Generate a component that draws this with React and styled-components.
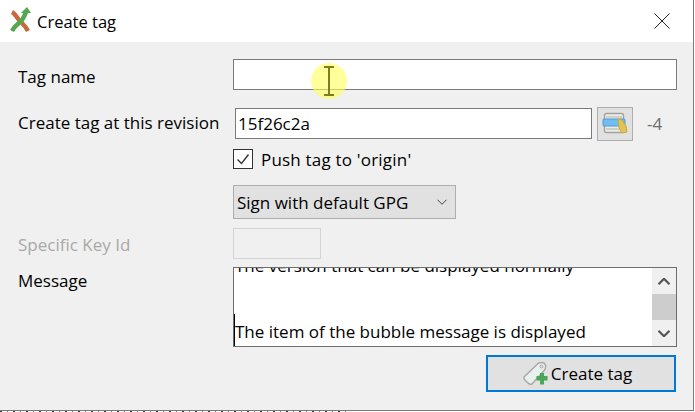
import React from "react";
import styled, { createGlobalStyle } from "styled-components";

const GlobalStyle = createGlobalStyle`
  html, body {
    margin: 0;
    padding: 0;
    background: #fff;
  }
  * {
    box-sizing: border-box;
  }
`;

const Page = styled.div`
  position: relative;
  width: 695px;
  height: 412px;
  overflow: hidden;
  background: #fff;
`;

const Dialog = styled.div`
  width: 694px;
  height: 411px;
  overflow: hidden;
  background: #f0f0f0;
  border-right: 1px solid #7a7a7a;
  border-bottom: 1px solid #7a7a7a;
  font-family: "Open Sans", "Noto Sans", sans-serif;
  font-size: 17px;
  color: #000;
`;

const BehindStrip = styled.div`
  width: 350px;
  height: 1px;
  background: repeating-linear-gradient(
    90deg,
    #444 0 2px,
    transparent 2px 7px,
    #777 7px 8px,
    transparent 8px 13px
  );
`;

const TitleBar = styled.div`
  height: 42px;
  background: #fff;
  display: flex;
  align-items: center;
  padding: 0 23px 0 10px;
  gap: 5px;
  font-size: 16.5px;
`;

const TitleText = styled.span`
  flex: 1;
`;

const AppIconWrap = styled.div`
  display: flex;
  margin-top: -4px;
`;

const Body = styled.div`
  display: grid;
  grid-template-columns: 215px 1fr;
  padding: 17px 16px 0 18px;
`;

const Label = styled.div`
  height: ${(p) => p.$h || 30}px;
  padding-top: ${(p) => p.$top || 0}px;
  color: ${(p) => (p.$disabled ? "#a9a9a9" : "#000")};
  line-height: 22px;
`;

const Field = styled.div`
  display: flex;
  align-items: flex-start;
  height: ${(p) => p.$h}px;
`;

const TextBox = styled.div`
  flex: ${(p) => (p.$w ? "none" : 1)};
  width: ${(p) => (p.$w ? `${p.$w}px` : "auto")};
  height: 31px;
  background: ${(p) => (p.$disabled ? "#f0f0f0" : "#fff")};
  border: ${(p) => (p.$disabled ? "1px solid #d4d4d4" : "1px solid #7a7a7a")};
  padding: 0 2px;
  line-height: 29px;
`;

const Revision = styled(TextBox)`
  margin-left: 2px;
  margin-right: 5px;
  flex: none;
  width: 357px;
`;

const PickButton = styled.div`
  width: 36px;
  height: 34px;
  margin-top: -1px;
  background: #e1e1e1;
  border: 1px solid #adadad;
  display: flex;
  align-items: center;
  justify-content: center;
`;

const Offset = styled.span`
  margin-left: 14px;
  color: #6d6d6d;
  line-height: 31px;
`;

const CheckRow = styled.div`
  display: flex;
  align-items: center;
  gap: 8px;
  height: 22px;
  letter-spacing: 0.2px;
`;

const CheckBox = styled.div`
  width: 20px;
  height: 20px;
  background: #fff;
  border: 1px solid #333;
  display: flex;
  align-items: center;
  justify-content: center;
`;

const Select = styled.div`
  width: 223px;
  height: 34px;
  background: #e1e1e1;
  border: 1px solid #adadad;
  padding: 0 8px 0 3px;
  display: flex;
  align-items: center;
  justify-content: space-between;
`;

const MessageBox = styled.div`
  flex: 1;
  height: 80px;
  background: #fff;
  border: 1px solid #6e6e6e;
  display: flex;
  overflow: hidden;
`;

const MessageText = styled.div`
  flex: 1;
  overflow: hidden;
  padding-left: 1px;
  line-height: 22px;
  margin-top: -13px;
  white-space: pre;
`;

const Caret = styled.span`
  position: absolute;
  left: -1px;
  top: -7px;
  width: 1px;
  height: 32px;
  background: #000;
`;

const CaretLine = styled.div`
  position: relative;
`;

const ScrollBar = styled.div`
  width: 24px;
  background: #f0f0f0;
  display: flex;
  flex-direction: column;
`;

const ScrollArrow = styled.div`
  height: 26px;
  display: flex;
  align-items: center;
  justify-content: center;
`;

const ScrollThumb = styled.div`
  height: 26px;
  background: #cdcdcd;
`;

const Footer = styled.div`
  display: flex;
  justify-content: flex-end;
  padding: 8px 17px 0 0;
`;

const PrimaryButton = styled.div`
  width: 190px;
  height: 37px;
  background: #e1e1e1;
  border: 2px solid #0078d7;
  display: flex;
  align-items: center;
  justify-content: center;
  gap: 3px;
  padding-right: 8px;
`;

const CursorSpot = styled.div`
  position: absolute;
  left: 311px;
  top: 63px;
  width: 36px;
  height: 36px;
  border-radius: 50%;
  background: rgba(255, 255, 90, 0.6);
  display: flex;
  align-items: center;
  justify-content: center;
`;

const AppIcon = () => (
  <svg width="22" height="25" viewBox="0 0 22 25">
    <path d="M2 5 C6 7 7 12 11 15 C14 18 16 20 18 24" fill="none" stroke="#c8693a" strokeWidth="4.4" />
    <path d="M2 24 C5 18 10 16 12 13 C14 10 15 8 16 5" fill="none" stroke="#52a84e" strokeWidth="4.4" />
    <path d="M11 6 L17 0 L21 6 Z" fill="#52a84e" />
  </svg>
);

const CloseIcon = () => (
  <svg width="16" height="16" viewBox="0 0 16 16">
    <path d="M0.5 0.5 L15.5 15.5 M15.5 0.5 L0.5 15.5" stroke="#222" strokeWidth="1" />
  </svg>
);

const PickIcon = () => (
  <svg width="26" height="24" viewBox="0 0 26 24">
    <rect x="2.5" y="1.5" width="19" height="19" rx="2" fill="#ecece6" stroke="#a2a29a" strokeWidth="1.4" />
    <path d="M4 5 H20 M4 17 H20" stroke="#c6c6c0" strokeWidth="1.5" />
    <rect x="1" y="7" width="22" height="7" rx="1" fill="#74bdf0" stroke="#4a9ada" />
    <path d="M16 7 L20 8 L24 14 L25 20 L20 21 L17 16 Z" fill="#e0c355" stroke="#c9a93f" />
  </svg>
);

const Check = () => (
  <svg width="14" height="14" viewBox="0 0 14 14">
    <path d="M1.5 7.5 L5.5 11.5 L12.5 2.5" fill="none" stroke="#333" strokeWidth="1.4" />
  </svg>
);

const Chevron = ({ w = 10, h = 6, up, color = "#333", sw = 1 }) => (
  <svg width={w} height={h} viewBox="0 0 11 6">
    <path d={up ? "M0.5 5.5 L5.5 0.5 L10.5 5.5" : "M0.5 0.5 L5.5 5.5 L10.5 0.5"} fill="none" stroke={color} strokeWidth={sw} />
  </svg>
);

const TagIcon = () => (
  <svg width="26" height="24" viewBox="0 0 26 24">
    <path d="M2 15 L16 1.5 Q19 0 22 1 L23.5 3 Q24 6 22.5 8 L10 22 Q8 23 6 21 L2 17 Z" fill="#e8f1ec" stroke="#a6a6a6" strokeWidth="1.4" />
    <circle cx="19.5" cy="4.5" r="1.5" fill="#e1e1e1" stroke="#a6a6a6" />
    <path d="M14.5 14 h3.5 v-3 h4 v3 h3.5 v4.5 h-3.5 v4 h-4 v-4 h-3.5 Z" fill="#4aa755" />
  </svg>
);

const IBeam = () => (
  <svg width="12" height="30" viewBox="0 0 12 30">
    <path d="M1 1 H11 M1 29 H11 M6 1 V29" fill="none" stroke="#7d7c1e" strokeWidth="2" />
  </svg>
);

export default function App() {
  return (
    <Page>
      <GlobalStyle />
      <Dialog>
        <TitleBar>
          <AppIconWrap>
            <AppIcon />
          </AppIconWrap>
          <TitleText>Create tag</TitleText>
          <CloseIcon />
        </TitleBar>
        <Body>
          <Label $h={49} $top={7}>Tag name</Label>
          <Field $h={47}>
            <TextBox />
          </Field>
          <Label $h={40} $top={4}>Create tag at this revision</Label>
          <Field $h={40}>
            <Revision>15f26c2a</Revision>
            <PickButton>
              <PickIcon />
            </PickButton>
            <Offset>-4</Offset>
          </Field>
          <div />
          <Field $h={37}>
            <CheckRow>
              <CheckBox>
                <Check />
              </CheckBox>
              Push tag to 'origin'
            </CheckRow>
          </Field>
          <div />
          <Field $h={43}>
            <Select>
              Sign with default GPG
              <Chevron />
            </Select>
          </Field>
          <Label $h={39} $top={6} $disabled>Specific Key Id</Label>
          <Field $h={39}>
            <TextBox $w={88} $disabled />
          </Field>
          <Label $h={80} $top={3}>Message</Label>
          <Field $h={80}>
            <MessageBox>
              <MessageText>
                <div>The version that can be displayed normally</div>
                <div> </div>
                <div> </div>
                <CaretLine>
                  <Caret />
                  The item of the bubble message is displayed
                </CaretLine>
              </MessageText>
              <ScrollBar>
                <ScrollArrow>
                  <Chevron w={12} h={7} up color="#555" sw={2} />
                </ScrollArrow>
                <ScrollThumb />
                <ScrollArrow>
                  <Chevron w={12} h={7} color="#555" sw={2} />
                </ScrollArrow>
              </ScrollBar>
            </MessageBox>
          </Field>
        </Body>
        <Footer>
          <PrimaryButton>
            <TagIcon />
            Create tag
          </PrimaryButton>
        </Footer>
      </Dialog>
      <BehindStrip />
      <CursorSpot>
        <IBeam />
      </CursorSpot>
    </Page>
  );
}
